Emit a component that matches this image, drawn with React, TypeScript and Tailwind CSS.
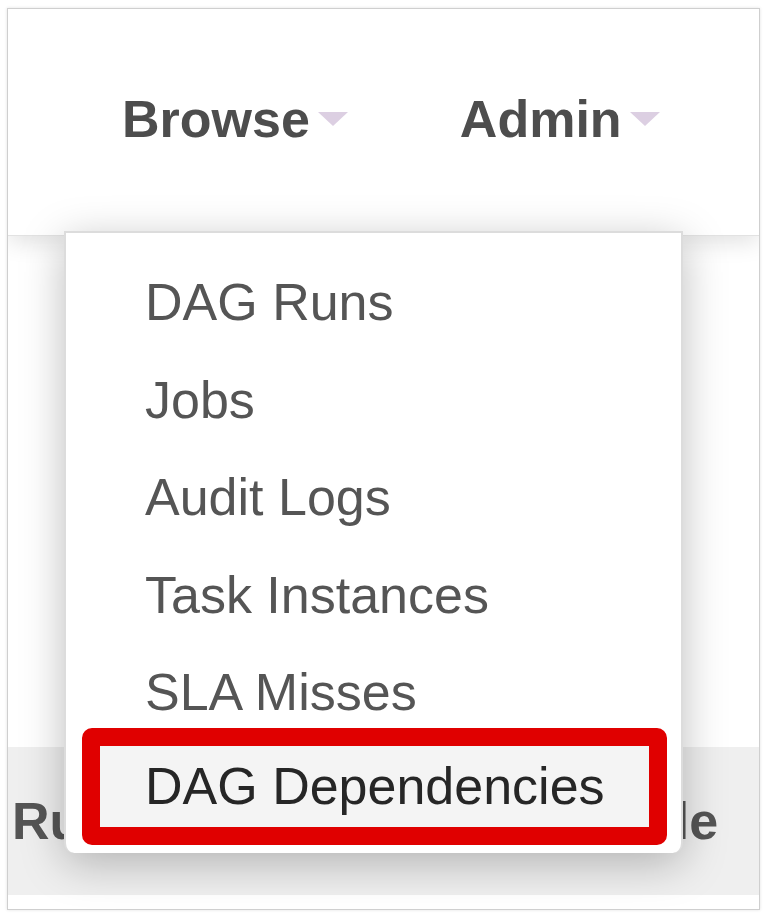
import React from "react";

const items = ["DAG Runs", "Jobs", "Audit Logs", "Task Instances", "SLA Misses"];

function Caret() {
  return (
    <span className="ml-[8px] inline-block h-0 w-0 border-l-[15px] border-r-[15px] border-t-[14px] border-l-transparent border-r-transparent border-t-[#dccfe2]" />
  );
}

export default function App() {
  return (
    <div
      className="min-h-screen bg-white pt-[8px] pl-[7px]"
      style={{ fontFamily: '"Liberation Sans", Arial, sans-serif' }}
    >
      <div className="relative flex h-[902px] w-[753px] flex-col overflow-hidden border border-[#cfcfcf] bg-white shadow-[0_0_3px_rgba(0,0,0,0.12)]">
        <header className="relative z-10 flex h-[227px] shrink-0 items-center border-b border-[#e2e2e2] bg-white pb-[6px] pl-[114px] text-[52px] font-bold text-[#4d4d4d] shadow-[0_6px_22px_rgba(0,0,0,0.12)]">
          <div className="flex items-center">
            <span className="leading-none">Browse</span>
            <Caret />
          </div>
          <div className="ml-[112px] flex items-center">
            <span className="leading-none">Admin</span>
            <Caret />
          </div>
        </header>

        <div className="h-[511px] shrink-0" />

        <div className="flex h-[148px] shrink-0 items-center gap-[345px] bg-[#efefef] pl-[4px] text-[52px] font-bold leading-none text-[#555]">
          <span>Runs</span>
          <span>Schedule</span>
        </div>

        <div className="flex-1 bg-white" />

        <div className="absolute left-[56px] top-[222px] z-20 w-[619px] rounded-b-[10px] border-2 border-b-0 border-[#dcdcdc] bg-white pb-[8px] pt-[21px] shadow-[0_10px_44px_rgba(0,0,0,0.26)]">
          {items.map((item) => (
            <div
              key={item}
              className="pl-[79px] text-[52px] leading-[97.5px] text-[#555]"
            >
              {item}
            </div>
          ))}
          <div className="ml-[16px] mr-[14px] mt-[-14px] rounded-[10px] border-[18px] border-[#e00000] bg-[#f4f4f4] pl-[45px] text-[52px] leading-[81px] text-[#262626]">
            DAG Dependencies
          </div>
        </div>
      </div>
    </div>
  );
}
